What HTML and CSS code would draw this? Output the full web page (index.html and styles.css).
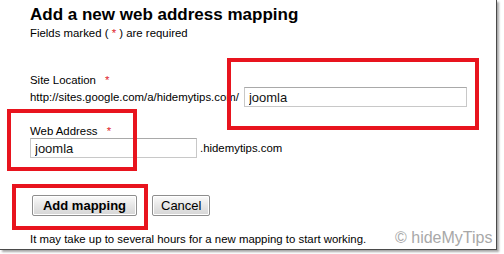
FILE: index.html
```html
<!DOCTYPE html>
<html>
<head>
<meta charset="utf-8">
<link rel="stylesheet" href="styles.css">
</head>
<body>
<div class="frame">
  <div class="content">
    <h1 class="title">Add a new web address mapping</h1>
    <p class="note">Fields marked ( <span class="req">*</span> ) are required</p>

    <div class="label label-site">Site Location <span class="req star">*</span></div>
    <div class="row">
      <span class="prefix">http://sites.google.com/a/hidemytips.com/</span>
      <input class="field field-site" type="text" value="joomla">
    </div>

    <div class="label label-web">Web Address <span class="req star">*</span></div>
    <div class="row">
      <input class="field field-web" type="text" value="joomla">
      <span class="suffix">.hidemytips.com</span>
    </div>

    <div class="buttons">
      <button class="btn btn-primary">Add mapping</button>
      <button class="btn">Cancel</button>
    </div>

    <p class="info">It may take up to several hours for a new mapping to start working.</p>
  </div>

  <div class="mark mark-1"></div>
  <div class="mark mark-2"></div>
  <div class="mark mark-3"></div>
  <div class="watermark">© hideMyTips</div>
</div>
</body>
</html>
```

FILE: styles.css
```css
html, body {
  margin: 0;
  padding: 0;
  background: #ffffff;
}
body {
  width: 504px;
  height: 254px;
  overflow: hidden;
  font-family: "Liberation Sans", Arial, sans-serif;
  color: #000;
}
.frame {
  position: relative;
  width: 496px;
  height: 249px;
  background: #fff;
  border-right: 1px solid #4a4a4a;
  border-bottom: 1px solid #4a4a4a;
  box-shadow: 2px 2px 2px rgba(0,0,0,0.35);
}
.content {
  padding-left: 30px;
  padding-top: 5px;
}
.title {
  margin: 0;
  font-size: 17px;
  line-height: 20px;
  font-weight: bold;
  color: #000;
}
.note {
  margin: 0;
  font-size: 11.4px;
  line-height: 14px;
  padding-top: 1px;
  color: #000;
}
.req {
  color: #e0242c;
}
.star {
  margin-left: 6px;
}
.label {
  font-size: 11.4px;
  color: #000;
}
.label-site {
  margin-top: 33px;
  line-height: 14px;
}
.label-web {
  margin-top: 18px;
  line-height: 13px;
}
.row {
  display: flex;
  align-items: center;
  font-size: 11.4px;
}
.prefix {
  margin-right: 5px;
}
.suffix {
  margin-left: 3px;
}
.field {
  box-sizing: border-box;
  height: 20px;
  margin: 0;
  padding: 0 4px;
  font-family: "Liberation Sans", Arial, sans-serif;
  font-size: 13px;
  color: #111;
  border: 1px solid #c8c8c8;
  border-top-color: #a9a9a9;
  background: #fff;
  outline: none;
}
.field-site {
  width: 223px;
}
.field-web {
  width: 167px;
  height: 20px;
}
.buttons {
  display: flex;
  gap: 15px;
  margin-top: 37px;
  padding-left: 2px;
}
.btn {
  box-sizing: border-box;
  height: 21px;
  margin: 0;
  padding: 0 8px;
  font-family: "Liberation Sans", Arial, sans-serif;
  font-size: 13px;
  color: #000;
  border: 1px solid #8e8e8e;
  border-radius: 2px;
  background: linear-gradient(#fbfbfb, #e6e6e6 50%, #d6d6d6);
  box-shadow: inset 0 0 0 1px #ffffff;
}
.btn-primary {
  font-weight: bold;
  width: 105px;
}
.info {
  margin: 16px 0 0 0;
  font-size: 11.4px;
  line-height: 14px;
  color: #000;
}
.mark {
  position: absolute;
  box-sizing: border-box;
  border: 4px solid #e8141e;
}
.mark-1 {
  left: 227px;
  top: 58px;
  width: 252px;
  height: 72px;
}
.mark-2 {
  left: 7px;
  top: 109px;
  width: 130px;
  height: 62px;
}
.mark-3 {
  left: 12px;
  top: 184px;
  width: 136px;
  height: 46px;
}
.watermark {
  position: absolute;
  left: 395px;
  top: 229px;
  font-size: 16px;
  line-height: 18px;
  color: #a8a8a8;
}
```
